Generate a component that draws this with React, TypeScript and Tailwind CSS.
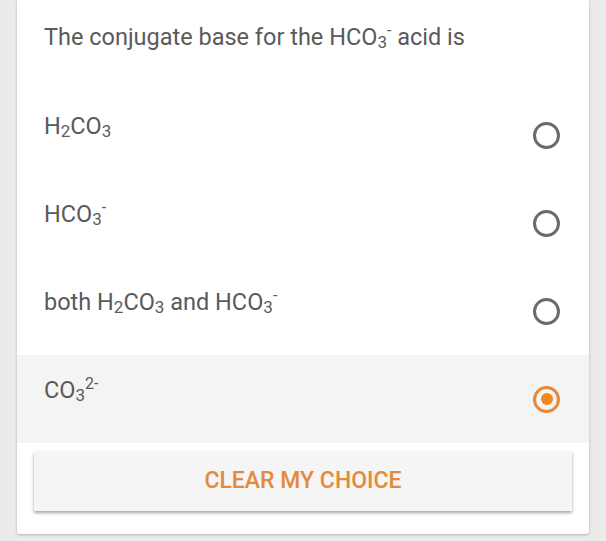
import React from "react";

type Option = { id: number; label: React.ReactNode };

const Sub = ({ children }: { children: React.ReactNode }) => (
  <sub className="text-[17px] leading-none relative top-[3px] align-baseline">{children}</sub>
);
const Sup = ({ children }: { children: React.ReactNode }) => (
  <sup className="text-[16px] leading-none relative -top-[9px] align-baseline">{children}</sup>
);

const options: Option[] = [
  { id: 1, label: <>H<Sub>2</Sub>CO<Sub>3</Sub></> },
  { id: 2, label: <>HCO<Sub>3</Sub><Sup>-</Sup></> },
  { id: 3, label: <>both H<Sub>2</Sub>CO<Sub>3</Sub> and HCO<Sub>3</Sub><Sup>-</Sup></> },
  { id: 4, label: <>CO<Sub>3</Sub><Sup>2-</Sup></> },
];

function Radio({ checked }: { checked: boolean }) {
  if (checked) {
    return (
      <span className="w-[27px] h-[27px] rounded-full border-[3px] border-[#e5893a] flex items-center justify-center">
        <span className="block w-[12px] h-[12px] rounded-full bg-[#f5861b]" />
      </span>
    );
  }
  return <span className="block w-[27px] h-[27px] rounded-full border-[3px] border-[#6b6b6b]" />;
}

export default function App() {
  const selected = 4;
  return (
    <div className="w-[606px] h-[541px] bg-[#ebebeb] overflow-hidden" style={{ fontFamily: "Roboto, 'Liberation Sans', sans-serif" }}>
      <div className="ml-[17px] w-[572px] h-[534px] bg-white rounded-b-[3px] shadow-[0_1px_3px_rgba(0,0,0,0.25)] flex flex-col">
        <div className="px-[27px] pt-[21px] h-[91px] text-[23.5px] leading-[33px] text-[#5a5a5a]">
          The conjugate base for the HCO<Sub>3</Sub><Sup>-</Sup> acid is
        </div>
        {options.map((o) => (
          <div
            key={o.id}
            className={`h-[88px] flex justify-between pl-[27px] pr-[29px] ${o.id === selected ? "bg-[#f4f4f4]" : ""}`}
          >
            <div className="pt-[19px] text-[23.5px] leading-[33px] text-[#5a5a5a]">{o.label}</div>
            <div className="self-center"><Radio checked={o.id === selected} /></div>
          </div>
        ))}
        <div className="px-[17px] pt-[8px]">
          <button className="w-full h-[60px] bg-[#f5f5f5] shadow-[0_2px_3px_rgba(0,0,0,0.35)] text-[23px] font-medium text-[#e58a38]">
            CLEAR MY CHOICE
          </button>
        </div>
      </div>
    </div>
  );
}
